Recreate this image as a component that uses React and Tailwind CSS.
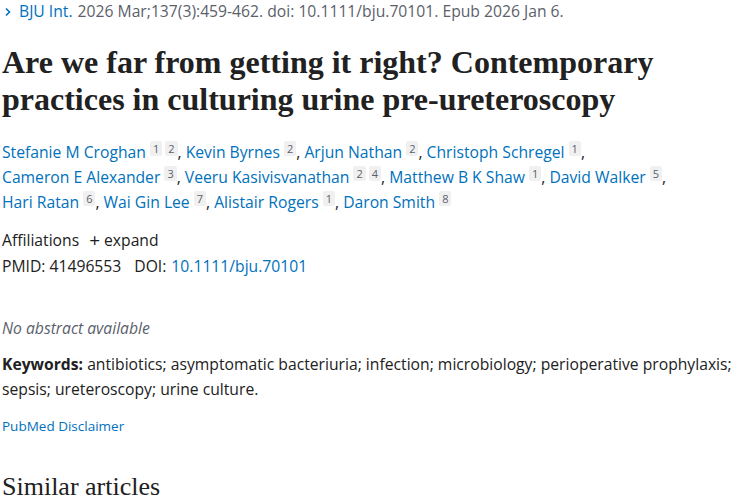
import { Fragment } from 'react';

const AUTHORS = [
  ['Stefanie M Croghan', ['1', '2']],
  ['Kevin Byrnes', ['2']],
  ['Arjun Nathan', ['2']],
  ['Christoph Schregel', ['1']],
  ['Cameron E Alexander', ['3']],
  ['Veeru Kasivisvanathan', ['2', '4']],
  ['Matthew B K Shaw', ['1']],
  ['David Walker', ['5']],
  ['Hari Ratan', ['6']],
  ['Wai Gin Lee', ['7']],
  ['Alistair Rogers', ['1']],
  ['Daron Smith', ['8']],
];

const body = { fontFamily: '"Open Sans", "Noto Sans", sans-serif' };
const serif = { fontFamily: '"Liberation Serif", serif' };

export default function App() {
  return (
    <div className="w-[750px] h-[500px] overflow-hidden bg-white pl-[2px] pr-[8px] text-[#212121]" style={body}>
      {/* citation */}
      <div className="flex items-center h-[24px] text-[15.7px] text-[#5b616b]">
        <svg className="w-[10px] h-[10px] ml-[1px] mr-[6px] text-[#0071bc]" viewBox="0 0 10 10" fill="none" stroke="currentColor" strokeWidth="1.6">
          <path d="M3 1.5 6.5 5 3 8.5" />
        </svg>
        <span className="text-[#0071bc]">BJU Int.</span>
        <span className="ml-[5px]">2026 Mar;137(3):459-462. doi: 10.1111/bju.70101. Epub 2026 Jan 6.</span>
      </div>

      {/* title */}
      <h1 className="mt-[20px] text-[32px] leading-[37px] font-bold text-[#212121]" style={serif}>
        Are we far from getting it right? Contemporary<br />practices in culturing urine pre-ureteroscopy
      </h1>

      {/* authors */}
      <div className="mt-[22px] text-[15.7px] leading-[25px]">
        {AUTHORS.map(([name, sups], i) => (
          <Fragment key={name}>
            <span className="whitespace-nowrap">
              <a className="text-[#0071bc]">{name}</a>{' '}
              {sups.map((s, j) => (
                <span key={s} className={`inline-block align-top mt-[1px] px-[3px] h-[15px] leading-[15px] text-[11px] text-[#5b616b] bg-[#f0f0f0] rounded-[2px] ${j > 0 ? 'ml-[3px]' : ''}`}>{s}</span>
              ))}
              {i < AUTHORS.length - 1 ? ',' : ''}
            </span>{' '}
          </Fragment>
        ))}
      </div>

      {/* affiliations */}
      <div className="mt-[13px] flex items-center text-[15.7px] h-[25px]">
        <span>Affiliations</span>
        <span className="ml-[10px] mr-[4px] text-[19px] leading-none text-[#212121]">+</span>
        <span>expand</span>
      </div>
      <div className="flex items-center text-[15.7px] h-[28px]">
        <span>PMID: 41496553</span>
        <span className="ml-[13px]">DOI: </span>
        <a className="ml-[5px] text-[#0071bc]">10.1111/bju.70101</a>
      </div>

      {/* abstract */}
      <p className="mt-[35px] text-[15.7px] italic text-[#5b616b] leading-[25px]">No abstract available</p>

      <p className="mt-[11px] text-[15.7px] leading-[25px]">
        <strong className="font-bold">Keywords:</strong> antibiotics; asymptomatic bacteriuria; infection; microbiology; perioperative prophylaxis; sepsis; ureteroscopy; urine culture.
      </p>

      <a className="block mt-[12px] text-[13.5px] leading-[25px] text-[#0071bc]">PubMed Disclaimer</a>

      <h2 className="mt-[33px] text-[26px] leading-[30px] font-normal" style={serif}>Similar articles</h2>
    </div>
  );
}
